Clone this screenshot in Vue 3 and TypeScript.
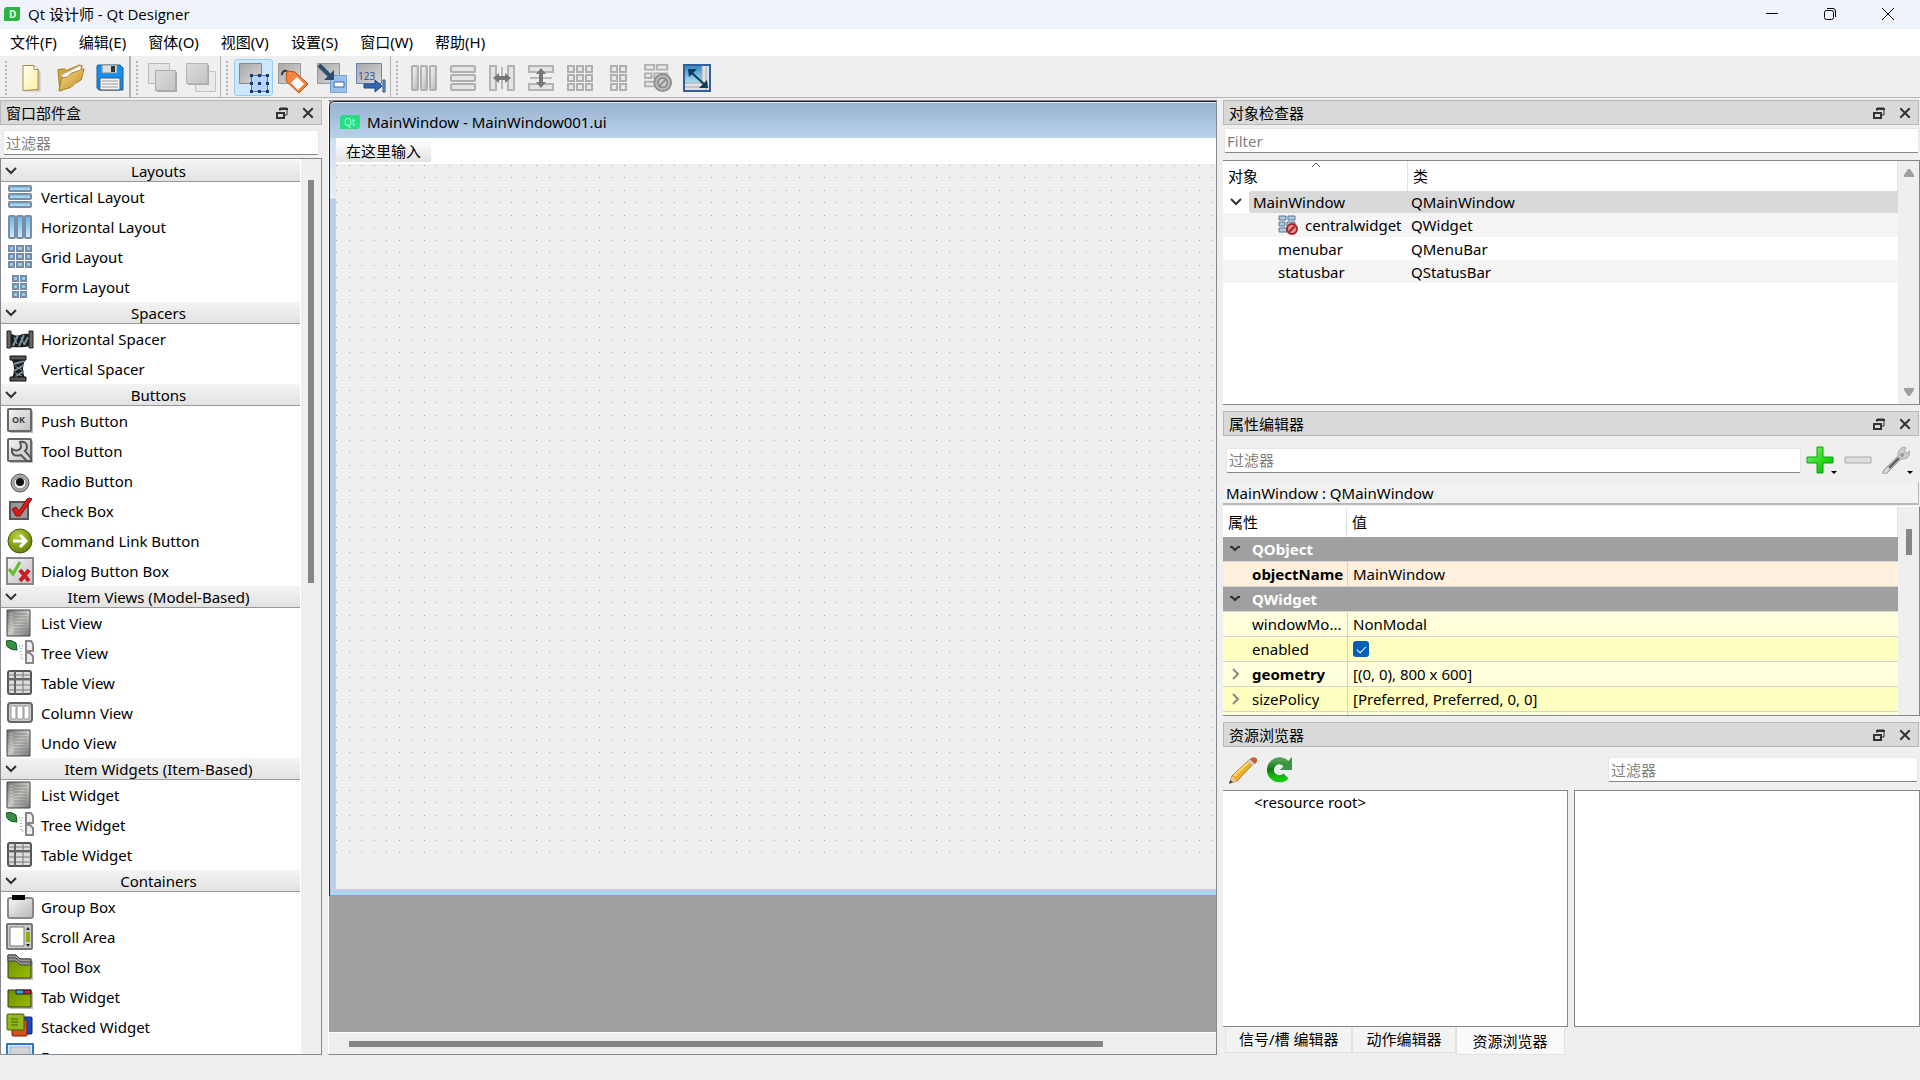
<script setup lang="ts">
import { ref } from 'vue'

interface WidgetItem {
  label: string
  icon: string
}
interface WidgetGroup {
  title: string
  items: WidgetItem[]
}
interface PropertyRow {
  name: string
  value?: string
  tone: string
  bold?: boolean
  group?: boolean
  expandable?: boolean
  check?: boolean
}

const menus: string[] = ['文件(F)', '编辑(E)', '窗体(O)', '视图(V)', '设置(S)', '窗口(W)', '帮助(H)']

const toolbars: { name: string; tools: { icon: string; label: string; active?: boolean }[] }[] = [
  {
    name: 'file',
    tools: [
      { icon: 'new', label: '新建' },
      { icon: 'open', label: '打开' },
      { icon: 'save', label: '保存' },
    ],
  },
  {
    name: 'order',
    tools: [
      { icon: 'lower', label: '放到后面' },
      { icon: 'raise', label: '放到前面' },
    ],
  },
  {
    name: 'mode',
    tools: [
      { icon: 'editwidgets', label: '编辑控件', active: true },
      { icon: 'buddy', label: '编辑信号/槽' },
      { icon: 'signal', label: '编辑伙伴' },
      { icon: 'taborder', label: '编辑 Tab 顺序' },
    ],
  },
  {
    name: 'layout',
    tools: [
      { icon: 'g-hlayout', label: '水平布局' },
      { icon: 'g-vlayout', label: '垂直布局' },
      { icon: 'g-hsplit', label: '水平分裂器' },
      { icon: 'g-vsplit', label: '垂直分裂器' },
      { icon: 'g-grid', label: '栅格布局' },
      { icon: 'g-form', label: '窗体布局' },
      { icon: 'g-break', label: '打破布局' },
      { icon: 'adjust', label: '调整大小' },
    ],
  },
]

const groups: WidgetGroup[] = [
  {
    title: 'Layouts',
    items: [
      { label: 'Vertical Layout', icon: 'vlayout' },
      { label: 'Horizontal Layout', icon: 'hlayout' },
      { label: 'Grid Layout', icon: 'grid' },
      { label: 'Form Layout', icon: 'form' },
    ],
  },
  {
    title: 'Spacers',
    items: [
      { label: 'Horizontal Spacer', icon: 'hspacer' },
      { label: 'Vertical Spacer', icon: 'vspacer' },
    ],
  },
  {
    title: 'Buttons',
    items: [
      { label: 'Push Button', icon: 'push' },
      { label: 'Tool Button', icon: 'tool' },
      { label: 'Radio Button', icon: 'radio' },
      { label: 'Check Box', icon: 'check' },
      { label: 'Command Link Button', icon: 'command' },
      { label: 'Dialog Button Box', icon: 'dialog' },
    ],
  },
  {
    title: 'Item Views (Model-Based)',
    items: [
      { label: 'List View', icon: 'list' },
      { label: 'Tree View', icon: 'tree' },
      { label: 'Table View', icon: 'table' },
      { label: 'Column View', icon: 'column' },
      { label: 'Undo View', icon: 'list' },
    ],
  },
  {
    title: 'Item Widgets (Item-Based)',
    items: [
      { label: 'List Widget', icon: 'list' },
      { label: 'Tree Widget', icon: 'tree' },
      { label: 'Table Widget', icon: 'table' },
    ],
  },
  {
    title: 'Containers',
    items: [
      { label: 'Group Box', icon: 'groupbox' },
      { label: 'Scroll Area', icon: 'scroll' },
      { label: 'Tool Box', icon: 'toolbox' },
      { label: 'Tab Widget', icon: 'tab' },
      { label: 'Stacked Widget', icon: 'stacked' },
      { label: 'Frame', icon: 'frame' },
    ],
  },
]

const properties: PropertyRow[] = [
  { name: 'QObject', tone: 'dark', group: true },
  { name: 'objectName', value: 'MainWindow', tone: 'peach', bold: true },
  { name: 'QWidget', tone: 'dark', group: true },
  { name: 'windowMo...', value: 'NonModal', tone: 'pale' },
  { name: 'enabled', tone: 'yellow', check: true },
  { name: 'geometry', value: '[(0, 0), 800 x 600]', tone: 'pale', bold: true, expandable: true },
  { name: 'sizePolicy', value: '[Preferred, Preferred, 0, 0]', tone: 'yellow', expandable: true },
  { name: '', value: '', tone: 'pale' },
]

const tabs: string[] = ['信号/槽 编辑器', '动作编辑器', '资源浏览器']
const activeTab = ref<number>(2)
const enabled = ref<boolean>(true)
const widgetFilter = ref<string>('')
const objectFilter = ref<string>('')
const propertyFilter = ref<string>('')
const resourceFilter = ref<string>('')
</script>

<template>
  <div class="app">
    <svg class="defs" aria-hidden="true">
      <defs>
        <linearGradient id="blue" x1="0" y1="0" x2="0" y2="1"><stop offset="0" stop-color="#6cb6e6" /><stop offset="1" stop-color="#ccebfa" /></linearGradient>
        <linearGradient id="gray" x1="0" y1="0" x2="1" y2="1"><stop offset="0" stop-color="#fafafa" /><stop offset="1" stop-color="#b4b4b4" /></linearGradient>
        <linearGradient id="soft" x1="0" y1="0" x2="1" y2="1"><stop offset="0" stop-color="#dcdcdc" /><stop offset="1" stop-color="#c4c4c4" /></linearGradient>
        <linearGradient id="mid" x1="0" y1="0" x2="1" y2="1"><stop offset="0" stop-color="#a8a8a8" /><stop offset="1" stop-color="#d8d8d8" /></linearGradient>
        <linearGradient id="pane" x1="0" y1="0" x2="1" y2="1"><stop offset="0" stop-color="#f4f4f4" /><stop offset="1" stop-color="#c0c0c0" /></linearGradient>
        <linearGradient id="list-fill" x1="0" y1="0" x2="1" y2="1"><stop offset="0" stop-color="#6f6f6f" /><stop offset=".5" stop-color="#c8c8c4" /><stop offset="1" stop-color="#777" /></linearGradient>
        <linearGradient id="cream" x1="0" y1="0" x2="1" y2="1"><stop offset="0" stop-color="#fffef0" /><stop offset="1" stop-color="#fdf0a0" /></linearGradient>
        <linearGradient id="gold" x1="0" y1="0" x2="1" y2="1"><stop offset="0" stop-color="#f8dc88" /><stop offset="1" stop-color="#c08c28" /></linearGradient>
        <linearGradient id="olive" x1="0" y1="0" x2="1" y2="1"><stop offset="0" stop-color="#6c8c00" /><stop offset="1" stop-color="#98c000" /></linearGradient>
        <linearGradient id="green" x1="0" y1="0" x2="1" y2="1"><stop offset="0" stop-color="#8af078" /><stop offset=".5" stop-color="#30dc20" /><stop offset="1" stop-color="#00b800" /></linearGradient>
        <linearGradient id="sky" x1="0" y1="0" x2="0" y2="1"><stop offset="0" stop-color="#3888c8" /><stop offset="1" stop-color="#b0e0f4" /></linearGradient>
        <linearGradient id="reload-fill" x1="0" y1="0" x2="0" y2="1"><stop offset="0" stop-color="#50a050" /><stop offset=".45" stop-color="#107818" /><stop offset="1" stop-color="#18c810" /></linearGradient>
        <radialGradient id="ball" cx=".4" cy=".3" r=".8"><stop offset="0" stop-color="#b8d040" /><stop offset="1" stop-color="#5c7800" /></radialGradient>
      </defs>

      <symbol id="new" viewBox="0 0 28 28"><path d="M6.500 2.500h11l5 5v20h-16z" fill="#888" opacity=".4" /><path d="M5 1.500h11l4 4v20l-15 1z" fill="url(#cream)" stroke="#a98c48" /><path d="M16 1.500v4h4" fill="#fff" stroke="#a98c48" /></symbol>
      <symbol id="open" viewBox="0 0 30 30"><path d="M1 6l7-1 2 2L24 1l3 1-1 4-18 11-3 12-2-1z" fill="#d4a43c" stroke="#a87c20" /><path d="M5 12L25 2l1 5-17 13z" fill="#fff" stroke="#ccc" /><path d="M2 29l3-14 6-1 4-4 14-5-3 12-7 4-4 4z" fill="url(#gold)" stroke="#a87c20" /></symbol>
      <symbol id="save" viewBox="0 0 28 28"><path d="M2 1h22l3 3v22H3l-2-2V2z" fill="#1090f4" stroke="#2a587c" /><path d="M6 1h15v8H6z" fill="#ddd" stroke="#78909c" /><path d="M15 2h4v6h-4z" fill="#333" /><path d="M4 14h20v12H4z" fill="#f4f4f4" stroke="#456" /><path d="M6 17h16M6 20h16M6 23h16" stroke="#999" /></symbol>
      <symbol id="lower" viewBox="0 0 30 30"><path d="M.5.500h21v20h-21z" fill="#e5e5e5" stroke="#bbb" /><path d="M9 9h20v20H9z" fill="#aaa" /><path d="M7.500 7.500h20v20h-20z" fill="url(#soft)" stroke="#aaa" /></symbol>
      <symbol id="raise" viewBox="0 0 30 30"><path d="M9.500 8.500h20v20h-20z" fill="#e9e9e9" stroke="#c4c4c4" /><path d="M2 2h21v20H2z" fill="#aaa" /><path d="M.5.500h21v20h-21z" fill="url(#soft)" stroke="#b4b4b4" /></symbol>
      <symbol id="editwidgets" viewBox="0 0 30 30"><path d="M.5.500h22v20h-22z" fill="url(#mid)" stroke="#888" /><path d="M12.500 12.500h16v16h-16z" fill="#b4d4fc" stroke="#4c74b4" /><path d="M11 11h3v3h-3zM19 11h3v3h-3zM27 11h3v3h-3zM11 19h3v3h-3zM27 19h3v3h-3zM11 27h3v3h-3zM19 27h3v3h-3zM27 27h3v3h-3zM19 19h3v3h-3z" fill="#1c3868" /></symbol>
      <symbol id="buddy" viewBox="0 0 30 30"><path d="M.5.500h22v20h-22z" fill="url(#mid)" stroke="#999" /><path d="M4 12q0-5 5-4" fill="none" stroke="#333" stroke-width="2" /><path d="M9 8l8 1 13 12-9 9L8 18z" fill="#f48440" stroke="#b85014" /><path d="M19 14l7 7-6 6-7-7z" fill="#fff" /></symbol>
      <symbol id="signal" viewBox="0 0 30 30"><path d="M.5.500h22v20h-22z" fill="url(#mid)" stroke="#999" /><path d="M13.500 12.500h16v17h-16z" fill="#98c0ec" stroke="#7ca0cc" /><path d="M17 19h10v5H17z" fill="#fff" stroke="#3c68a8" /><path d="M2 2l11 11" stroke="#2c4c70" stroke-width="4" /><path d="M17 17V7L7 17z" fill="#2c4c70" /></symbol>
      <symbol id="taborder" viewBox="0 0 30 30"><path d="M.5.500h25v20h-25z" fill="url(#mid)" stroke="#6884b0" /><text x="2" y="17" font-size="10" fill="#305898">123</text><path d="M8 21h11v-4l7 6-7 6v-4H8z" fill="#3468b8" stroke="#204880" /><path d="M27 17h2v12h-2z" fill="#8ab0e4" stroke="#204880" /></symbol>

      <symbol id="g-hlayout" viewBox="0 0 28 28"><g fill="url(#gray)" stroke="#b0b0b0" stroke-width="2"><rect x="2" y="2" width="6" height="24" rx="1" /><rect x="11" y="2" width="6" height="24" rx="1" /><rect x="20" y="2" width="6" height="24" rx="1" /></g></symbol>
      <symbol id="g-vlayout" viewBox="0 0 28 28"><g fill="#e4e4e4" stroke="#b0b0b0" stroke-width="2"><rect x="2" y="2" width="24" height="6" rx="1" /><rect x="2" y="11" width="24" height="6" rx="1" /><rect x="2" y="20" width="24" height="6" rx="1" /></g></symbol>
      <symbol id="g-hsplit" viewBox="0 0 28 28"><g fill="#e4e4e4" stroke="#b4b4b4" stroke-width="2"><rect x="2" y="2" width="6" height="24" /><rect x="20" y="2" width="6" height="24" /></g><path d="M14 3v22" stroke="#bbb" stroke-width="2" /><path d="M5 14l6-5v3h6V9l6 5-6 5v-3h-6v3z" fill="#777" /></symbol>
      <symbol id="g-vsplit" viewBox="0 0 28 28"><g fill="#e4e4e4" stroke="#b4b4b4" stroke-width="2"><rect x="2" y="2" width="24" height="6" /><rect x="2" y="20" width="24" height="6" /></g><path d="M3 14h22" stroke="#bbb" stroke-width="2" /><path d="M14 4l5 6h-3v8h3l-5 6-5-6h3v-8H9z" fill="#777" /></symbol>
      <symbol id="g-grid" viewBox="0 0 28 28"><g fill="#e8e8e8" stroke="#b0b0b0" stroke-width="2"><path d="M2 2h6v6H2zM11 2h6v6h-6zM20 2h6v6h-6zM2 11h6v6H2zM11 11h6v6h-6zM20 11h6v6h-6zM2 20h6v6H2zM11 20h6v6h-6zM20 20h6v6h-6z" /></g></symbol>
      <symbol id="g-form" viewBox="0 0 28 28"><g fill="#e8e8e8" stroke="#b0b0b0" stroke-width="2"><path d="M6 2h6v6H6zM15 2h6v6h-6zM6 11h6v6H6zM15 11h6v6h-6zM6 20h6v6H6zM15 20h6v6h-6z" /></g></symbol>
      <symbol id="g-break" viewBox="0 0 30 30"><g fill="#e8e8e8" stroke="#b0b0b0" stroke-width="2"><path d="M1 1h10v5H1zM14 1h11v5H14zM1 10h7v5H1zM11 10h14v5H11zM1 19h13v5H1z" /></g><circle cx="20" cy="20" r="9" fill="#bbb" stroke="#8c8c8c" stroke-width="2" /><circle cx="20" cy="20" r="5" fill="#ccc" stroke="#8c8c8c" stroke-width="2" /><path d="M16 24l8-8" stroke="#8c8c8c" stroke-width="2" /></symbol>
      <symbol id="adjust" viewBox="0 0 28 28"><path d="M1 1h26v26H1z" fill="#e0e0e0" stroke="#30609c" stroke-width="2" /><path d="M2 2h17v17H2z" fill="url(#sky)" /><path d="M19 2v17H2M2 23h24M23 2v24" stroke="#aaa" fill="none" /><path d="M9 9l13 12" stroke="#0c3c5c" stroke-width="2" /><path d="M5 5h9l-8 8zM25 24h-9l8-8z" fill="#0c3c5c" /></symbol>

      <symbol id="vlayout" viewBox="0 0 28 28"><g fill="url(#blue)" stroke="#7a8ca4" stroke-width="2"><rect x="3" y="3" width="22" height="5" rx="1" /><rect x="3" y="11" width="22" height="5" rx="1" /><rect x="3" y="19" width="22" height="5" rx="1" /></g></symbol>
      <symbol id="hlayout" viewBox="0 0 28 28"><g fill="url(#blue)" stroke="#7a8ca4" stroke-width="2"><rect x="3" y="3" width="6" height="22" rx="1" /><rect x="11" y="3" width="6" height="22" rx="1" /><rect x="19" y="3" width="6" height="22" rx="1" /></g></symbol>
      <symbol id="grid" viewBox="0 0 28 28"><g fill="#94cef0" stroke="#7a8ca4" stroke-width="2"><path d="M3 3h5v5H3zM11 3h6v5h-6zM20 3h5v5h-5zM3 11h5v5H3zM11 11h6v5h-6zM20 11h5v5h-5zM3 19h5v5H3zM11 19h6v5h-6zM20 19h5v5h-5z" /></g></symbol>
      <symbol id="form" viewBox="0 0 28 28"><g fill="#94cef0" stroke="#7a8ca4" stroke-width="2"><path d="M7 3h5v5H7zM15 3h5v5h-5zM7 11h5v5H7zM15 11h5v5h-5zM7 19h5v5H7zM15 19h5v5h-5z" /></g></symbol>
      <symbol id="hspacer" viewBox="0 0 28 28"><path d="M4 8q6 4 10 2t10-1v12q-6 2-20 1z" fill="#1c1c1c" /><path d="M7 21l5-11M13 21l5-11M18 20l4-8" stroke="#7494a8" stroke-width="2" /><path d="M8 12l3 7M15 12l3 7" stroke="#8ca0ac" /><path d="M1 6h4v17H1zM23 6h4v17h-4z" fill="#666" stroke="#222" /></symbol>
      <symbol id="vspacer" viewBox="0 0 28 28"><path d="M6 5h13q-4 9 0 18H6q4-9 0-18z" fill="#1c1c1c" /><path d="M8 9l10-3M8 16l10-6M9 22l9-6" stroke="#7494a8" stroke-width="2" /><path d="M9 11l7 4M9 18l7 3" stroke="#8ca0ac" /><path d="M4 1h16v4H4zM4 22h16v4H4z" fill="#555" stroke="#111" /></symbol>
      <symbol id="push" viewBox="0 0 28 28"><path d="M4 4h23v22H4z" fill="#bbb" /><rect x="2" y="2" width="23" height="22" rx="1" fill="url(#pane)" stroke="#666" stroke-width="2" /><text x="6" y="16" font-size="9" font-weight="700" fill="#444">OK</text></symbol>
      <symbol id="tool" viewBox="0 0 28 28"><path d="M4 4h23v22H4z" fill="#bbb" /><rect x="2" y="2" width="23" height="22" rx="1" fill="url(#pane)" stroke="#666" stroke-width="2" /><path d="M14 5q7-1 7 5 0 3-2 4l6 7v3h-4l-6-6q-8 2-9-3v-3q5 3 8 0 2-2 0-7z" fill="#d4d4d4" stroke="#555" stroke-width="2" /></symbol>
      <symbol id="radio" viewBox="0 0 28 28"><circle cx="14" cy="16" r="9" fill="#a8a8a8" stroke="#555" /><circle cx="14" cy="16" r="6" fill="#eee" stroke="#888" /><circle cx="14" cy="15" r="4" fill="#111" /></symbol>
      <symbol id="check" viewBox="0 0 28 28"><path d="M4 5h18v17H4z" fill="#999" stroke="#555" stroke-width="2" /><path d="M6 12l4-2 3 4 8-12q3-2 5 0L14 19h-4z" fill="#e01818" stroke="#801010" /></symbol>
      <symbol id="command" viewBox="0 0 28 28"><circle cx="14" cy="14" r="12" fill="url(#ball)" stroke="#44580c" /><path d="M7 14h11M14 8l6 6-6 6" fill="none" stroke="#fff" stroke-width="3" /></symbol>
      <symbol id="dialog" viewBox="0 0 28 28"><path d="M1 1h26v26H1z" fill="url(#pane)" stroke="#888" stroke-width="2" /><path d="M3 12l4 5 7-12" fill="none" stroke="#64bc2c" stroke-width="3" /><path d="M14 13l9 11M23 13l-9 11" stroke="#cc1c24" stroke-width="4" /></symbol>
      <symbol id="list" viewBox="0 0 28 28"><path d="M1 1h23v26H1z" fill="url(#list-fill)" stroke="#444" /><path d="M8 5h13M8 8h13M8 11h13M8 14h13M8 17h13M8 20h13M8 23h13" stroke="#888" /><path d="M4 5h2M4 8h2M4 11h2M4 14h2M4 17h2M4 20h2M4 23h2" stroke="#ccc" /></symbol>
      <symbol id="tree" viewBox="0 0 28 28"><path d="M0 2q5-2 10 2l1 7q-9 0-11-6z" fill="#389040" stroke="#145420" /><path d="M13 7h6M15 9v11h4" fill="none" stroke="#777" stroke-dasharray="1 2" stroke-width="1" /><g fill="#eee" stroke="#888" stroke-width="2"><path d="M20 2h5l2 3v7h-7zM20 14h4l3 3v7h-7z" /></g></symbol>
      <symbol id="table" viewBox="0 0 28 28"><rect x="2" y="2" width="23" height="23" rx="2" fill="#dcdcdc" stroke="#555" stroke-width="2" /><path d="M2 6h23M2 11h23M2 16h23M2 21h23M9 2v23M17 2v23" stroke="#777" stroke-width="1" /><path d="M9 2v23M2 10h23" stroke="#666" stroke-width="2" /></symbol>
      <symbol id="column" viewBox="0 0 28 28"><rect x="2" y="4" width="24" height="19" rx="3" fill="#ccc" stroke="#666" stroke-width="2" /><path d="M5 7h5v13H5zM11 7h6v13h-6zM18 7h5v13h-5z" fill="#fff" stroke="#999" /></symbol>
      <symbol id="groupbox" viewBox="0 0 28 28"><rect x="2" y="5" width="25" height="20" rx="2" fill="url(#gray)" stroke="#888" stroke-width="2" /><path d="M6 2h13v5H6z" fill="#050505" /></symbol>
      <symbol id="scroll" viewBox="0 0 28 28"><rect x="1" y="1" width="25" height="25" rx="1" fill="#ccc" stroke="#777" stroke-width="2" /><path d="M4 4h14v19H4z" fill="#fff" stroke="#777" /><path d="M20 9h4v10h-4z" fill="#8cb000" /><path d="M20 7l2-3 2 3zM20 21l2 3 2-3z" fill="#222" /></symbol>
      <symbol id="toolbox" viewBox="0 0 28 28"><path d="M4 4h9l4 4h10v19H4z" fill="#bbb" /><path d="M2 2h8l4 4h11v19H2z" fill="url(#olive)" stroke="#333" /><path d="M2 2h8l4 4h11v6H14l-4-4H2z" fill="#999" stroke="#444" /><path d="M2 5h8l4 4h11" fill="none" stroke="#444" /></symbol>
      <symbol id="tab" viewBox="0 0 28 28"><path d="M4 9h23v17H4z" fill="#bbb" /><path d="M2 7h23v17H2z" fill="url(#olive)" stroke="#333" stroke-width="1" /><path d="M10 7h8v4h-8z" fill="#38a4e4" stroke="#222" /><path d="M18 7h7v4h-7z" fill="#d02028" stroke="#222" /></symbol>
      <symbol id="stacked" viewBox="0 0 28 28"><rect x="11" y="4" width="15" height="17" rx="1" fill="#1848c8" stroke="#082060" /><rect x="6" y="7" width="15" height="16" rx="1" fill="#d85020" stroke="#702008" /><rect x="1" y="1" width="17" height="16" rx="1" fill="#90b81c" stroke="#485c08" /><path d="M5 6h7M5 9h7M5 12h7" stroke="#3c6400" /></symbol>
      <symbol id="frame" viewBox="0 0 28 28"><path d="M1 1h26v26H1z" fill="#dceaf4" stroke="#3478c4" stroke-width="2" /><path d="M4 4h20v20H4z" fill="#d4d4d4" stroke="#90bce4" /></symbol>
      <symbol id="broken" viewBox="0 0 20 20"><path d="M1 1h7v4H1zM10 1h7v4h-7zM1 7h6v4H1zM9 7h8v4H9zM1 13h8v4H1z" fill="#a4d0ec" stroke="#60748c" /><circle cx="14" cy="14" r="5" fill="#d89090" stroke="#a82828" stroke-width="2" /><path d="M11 17l6-6" stroke="#a82828" stroke-width="2" /></symbol>

      <symbol id="plus" viewBox="0 0 28 28"><path d="M11 1h6v10h10v6H17v10h-6V17H1v-6h10z" fill="url(#green)" stroke="#12a012" stroke-width="1" /></symbol>
      <symbol id="minus" viewBox="0 0 28 28"><path d="M1 11h26v6H1z" fill="#ddd" stroke="#aaa" /></symbol>
      <symbol id="wrench" viewBox="0 0 28 28"><path d="M3 26L19 10" stroke="#999" stroke-width="5" stroke-linecap="round" /><path d="M3 26L19 10" stroke="#dcdcdc" stroke-width="3" stroke-linecap="round" /><path d="M7 22L17 12" stroke="#555" stroke-width="2" /><path d="M16 11q-1-8 6-10l2 1-2 3 3 2 3-2q0 8-7 8-3 1-5-2z" fill="#ccc" stroke="#aaa" /><circle cx="20" cy="9" r="2" fill="#999" /></symbol>
      <symbol id="pencil" viewBox="0 0 28 28"><path d="M1 27l2-7L21 3l4 4L8 25z" fill="#eeac2c" stroke="#b47c1c" /><path d="M5 20L21 5" stroke="#ffd878" stroke-width="2" /><path d="M1 27l2-7 5 5z" fill="#e8c898" /><path d="M0 28l1-4 3 2z" fill="#444" /><path d="M19 5l2-2 5 5-2 2z" fill="#ccc" /><path d="M21 3q3-3 6-1t0 5l-1 1z" fill="#c85c3c" /></symbol>
      <symbol id="reload" viewBox="0 0 28 28"><path d="M20 20a9 9 0 1 1 1-11" fill="none" stroke="url(#reload-fill)" stroke-width="7" /><path d="M26 1v13H14z" fill="#3c9444" /></symbol>

      <symbol id="float" viewBox="0 0 12 12"><path d="M4 4V1h7v7H8" fill="none" stroke="#333" stroke-width="1" /><path d="M3 1h9v2H3zM0 5h9v2H0z" fill="#333" /><path d="M1 6h7v5H1z" fill="none" stroke="#333" stroke-width="2" /></symbol>
      <symbol id="close" viewBox="0 0 12 12"><path d="M2 2l8 8M10 2l-8 8" stroke="#333" stroke-width="2" stroke-linecap="square" /></symbol>
      <symbol id="chev-down" viewBox="0 0 12 12"><path d="M1 3l5 5 5-5" fill="none" stroke="#333" stroke-width="2" /></symbol>
      <symbol id="chev-small" viewBox="0 0 12 12"><path d="M1 4h2l3 3 3-3h2" fill="none" stroke="#333" stroke-width="2" /></symbol>
      <symbol id="chev-right" viewBox="0 0 12 12"><path d="M4 1l5 5-5 5" fill="none" stroke="#888" stroke-width="2" /></symbol>
    </svg>

    <header class="titlebar">
      <svg class="app-icon" viewBox="0 0 16 14"><path d="M2 0h14v12l-2 2H0V2z" fill="#2cb440" /><text x="5" y="11" font-size="10" font-weight="700" fill="#e4ffe4">D</text></svg>
      <h1>Qt 设计师 - Qt Designer</h1>
      <div class="window-buttons">
        <button type="button" aria-label="最小化"><svg viewBox="0 0 12 12"><path d="M0 5.500h12" stroke="#000" /></svg></button>
        <button type="button" aria-label="还原"><svg viewBox="0 0 12 12"><rect x=".5" y="2.500" width="9" height="9" rx="2" fill="none" stroke="#000" /><path d="M3 .5h6q2.500 0 2.500 2.500v6" fill="none" stroke="#000" /></svg></button>
        <button type="button" aria-label="关闭"><svg viewBox="0 0 12 12"><path d="M0 0l12 12M12 0L0 12" stroke="#000" /></svg></button>
      </div>
    </header>

    <nav class="menubar">
      <button v-for="m in menus" :key="m" type="button">{{ m }}</button>
    </nav>

    <div class="toolbars">
      <div v-for="bar in toolbars" :key="bar.name" class="toolbar" :class="bar.name">
        <span class="grip"></span>
        <button v-for="t in bar.tools" :key="t.icon" type="button" :class="{ active: t.active }" :aria-label="t.label">
          <svg><use :href="'#' + t.icon" /></svg>
        </button>
      </div>
    </div>

    <main class="body">
      <aside class="dock widget-box">
        <div class="dock-title">
          <h2>窗口部件盒</h2>
          <button type="button" aria-label="浮动"><svg><use href="#float" /></svg></button>
          <button type="button" aria-label="关闭"><svg><use href="#close" /></svg></button>
        </div>
        <input v-model="widgetFilter" class="filter" type="text" placeholder="过滤器" aria-label="过滤器" />
        <div class="widget-list">
          <div class="widget-scroll">
            <section v-for="g in groups" :key="g.title">
              <button type="button" class="group-title">
                <svg><use href="#chev-down" /></svg>
                <span>{{ g.title }}</span>
              </button>
              <ul>
                <li v-for="w in g.items" :key="w.label">
                  <svg><use :href="'#' + w.icon" /></svg>
                  <span>{{ w.label }}</span>
                </li>
              </ul>
            </section>
          </div>
          <div class="scrollbar"><span class="thumb"></span></div>
        </div>
      </aside>

      <section class="mdi">
        <div class="canvas">
          <article class="form-window">
            <header>
              <svg viewBox="0 0 20 14"><path d="M2 0h18v12l-2 2H0V2z" fill="#2cdc84" /><text x="4" y="11" font-size="10" fill="#a4ffd0">Qt</text></svg>
              <h2>MainWindow - MainWindow001.ui</h2>
            </header>
            <div class="form-body">
              <div class="form-menu"><button type="button">在这里输入</button></div>
              <div class="form-grid"></div>
              <div class="form-status"></div>
            </div>
          </article>
        </div>
        <div class="hscroll"><span class="thumb"></span></div>
      </section>

      <aside class="side">
        <section class="dock">
          <div class="dock-title">
            <h2>对象检查器</h2>
            <button type="button" aria-label="浮动"><svg><use href="#float" /></svg></button>
            <button type="button" aria-label="关闭"><svg><use href="#close" /></svg></button>
          </div>
          <input v-model="objectFilter" class="filter object-filter" type="text" placeholder="Filter" aria-label="Filter" />
          <div class="panel object-panel">
            <table class="objects">
              <colgroup><col class="name-col" /><col /></colgroup>
              <thead>
                <tr>
                  <th>对象<svg class="sort" viewBox="0 0 10 6"><path d="M1 5l4-4 4 4" fill="none" stroke="#666" /></svg></th>
                  <th>类</th>
                </tr>
              </thead>
              <tbody>
                <tr class="selected">
                  <td><div class="root"><svg><use href="#chev-down" /></svg><span>MainWindow</span></div></td>
                  <td>QMainWindow</td>
                </tr>
                <tr class="alt tall">
                  <td><div class="leaf"><svg><use href="#broken" /></svg>centralwidget</div></td>
                  <td>QWidget</td>
                </tr>
                <tr>
                  <td><div class="leaf">menubar</div></td>
                  <td>QMenuBar</td>
                </tr>
                <tr class="alt">
                  <td><div class="leaf">statusbar</div></td>
                  <td>QStatusBar</td>
                </tr>
              </tbody>
            </table>
            <div class="scrollbar arrows">
              <svg viewBox="0 0 10 8"><path d="M4 0h2l4 6v2H0V6z" fill="#a0a0a0" /></svg>
              <svg viewBox="0 0 10 8"><path d="M4 8h2l4-6V0H0v2z" fill="#a0a0a0" /></svg>
            </div>
          </div>
        </section>

        <section class="dock">
          <div class="dock-title">
            <h2>属性编辑器</h2>
            <button type="button" aria-label="浮动"><svg><use href="#float" /></svg></button>
            <button type="button" aria-label="关闭"><svg><use href="#close" /></svg></button>
          </div>
          <div class="property-tools">
            <input v-model="propertyFilter" class="filter" type="text" placeholder="过滤器" aria-label="过滤器" />
            <button type="button" aria-label="添加动态属性" class="drop"><svg><use href="#plus" /></svg></button>
            <button type="button" aria-label="删除动态属性"><svg><use href="#minus" /></svg></button>
            <button type="button" aria-label="配置" class="drop"><svg><use href="#wrench" /></svg></button>
          </div>
          <p class="object-label">MainWindow : QMainWindow</p>
          <div class="panel property-panel">
            <table class="properties">
              <colgroup><col class="prop-col" /><col /></colgroup>
              <thead>
                <tr><th>属性</th><th>值</th></tr>
              </thead>
              <tbody>
                <tr v-for="p in properties" :key="p.name" :class="[p.tone, { bold: p.bold || p.group }]">
                  <td :colspan="p.group ? 2 : 1">
                    <div class="prop-name">
                      <svg v-if="p.group"><use href="#chev-small" /></svg>
                      <svg v-else-if="p.expandable"><use href="#chev-right" /></svg>
                      <span>{{ p.name }}</span>
                    </div>
                  </td>
                  <td v-if="!p.group" class="value">
                    <input v-if="p.check" v-model="enabled" type="checkbox" :aria-label="p.name" />
                    <template v-else>{{ p.value }}</template>
                  </td>
                </tr>
              </tbody>
            </table>
            <div class="scrollbar"><span class="thumb"></span></div>
          </div>
        </section>

        <section class="dock">
          <div class="dock-title">
            <h2>资源浏览器</h2>
            <button type="button" aria-label="浮动"><svg><use href="#float" /></svg></button>
            <button type="button" aria-label="关闭"><svg><use href="#close" /></svg></button>
          </div>
          <div class="resource-tools">
            <button type="button" aria-label="编辑资源"><svg><use href="#pencil" /></svg></button>
            <button type="button" aria-label="重新加载"><svg><use href="#reload" /></svg></button>
            <input v-model="resourceFilter" class="filter" type="text" placeholder="过滤器" aria-label="过滤器" />
          </div>
          <div class="resource-panes">
            <div class="pane">&lt;resource root&gt;</div>
            <div class="pane"></div>
          </div>
        </section>

        <div class="tabs" role="tablist">
          <button
            v-for="(t, i) in tabs"
            :key="t"
            type="button"
            role="tab"
            :aria-selected="activeTab === i"
            :class="{ current: activeTab === i }"
            @click="activeTab = i"
          >{{ t }}</button>
        </div>
      </aside>
    </main>
    <footer class="statusbar"></footer>
  </div>
</template>

<style>
body {
  overflow: hidden;
  background: #efefef;
}
</style>

<style scoped>
.app {
  display: flex;
  flex-direction: column;
  height: 100vh;
  background: #efefef;
  color: #000;
  font: 15px/20px "Noto Sans", "Noto Sans CJK SC", sans-serif;
}
.defs {
  position: absolute;
  width: 0;
  height: 0;
}
* {
  box-sizing: border-box;
}
button {
  display: flex;
  align-items: center;
  justify-content: center;
  padding: 0;
  border: 0;
  background: none;
  color: inherit;
  font: inherit;
  white-space: nowrap;
}
h1,
h2,
p,
ul {
  margin: 0;
  padding: 0;
  font: inherit;
  list-style: none;
}
svg {
  flex: none;
  display: block;
}

.titlebar {
  display: flex;
  align-items: center;
  flex: 0 0 29px;
  padding: 0 3px 2px 4px;
  background: #eff3fb;
  font-family: "Open Sans", "Noto Sans CJK SC", sans-serif;
}
.app-icon {
  width: 16px;
  height: 14px;
  margin-right: 8px;
  overflow: visible;
}
.window-buttons {
  display: flex;
  margin-left: auto;
}
.window-buttons button {
  width: 58px;
  height: 27px;
}
.window-buttons svg {
  width: 12px;
  height: 12px;
}

.menubar {
  display: flex;
  flex: 0 0 27px;
  gap: 22px;
  padding: 0 10px 2px;
  background: #fff;
}

.toolbars {
  display: flex;
  flex: 0 0 42px;
  border-bottom: 1px solid #b4b4b4;
}
.toolbar {
  display: flex;
  align-items: center;
  padding-top: 2px;
  border-right: 1px solid #b4b4b4;
}
.toolbar.file {
  border-right-width: 2px;
}
.toolbar.layout {
  flex: 1;
  border-right: 0;
}
.grip {
  width: 2px;
  height: 34px;
  margin: 0 6px 0 5px;
  background: repeating-linear-gradient(#b8b8b8 0 2px, transparent 2px 4px);
}
.file .grip {
  margin-right: 5px;
}
.toolbar button {
  width: 39px;
  height: 37px;
  border: 1px solid transparent;
  border-radius: 3px;
}
.toolbar.order button {
  width: 38px;
}
.toolbar button.active {
  border-color: #98ccf4;
  background: #cce8ff;
}
.toolbar svg {
  width: 28px;
  height: 28px;
}
.toolbar.mode svg,
.toolbar.order svg {
  width: 30px;
  height: 30px;
}

.body {
  display: flex;
  flex: 1;
  min-height: 0;
  padding-top: 2px;
}
.dock {
  display: flex;
  flex-direction: column;
  min-width: 0;
  min-height: 0;
}
.widget-box {
  flex: 0 0 322px;
}
.dock-title {
  display: flex;
  align-items: center;
  flex: 0 0 25px;
  padding: 1px 0 0 5px;
  border: 1px solid #b8b8b8;
  background: #d9d9d9;
}
.dock-title h2 {
  flex: 1;
}
.dock-title button {
  width: 26px;
  height: 22px;
}
.dock-title svg {
  width: 12px;
  height: 12px;
}
.filter {
  flex: none;
  height: 25px;
  min-width: 0;
  padding: 0 2px;
  border: 1px solid #e6e6e6;
  border-bottom: 1px solid #868686;
  border-radius: 2px;
  outline: 0;
  background: #fff;
  font: inherit;
}
.filter::placeholder {
  color: #808080;
  opacity: 1;
}
.widget-box > .filter {
  margin: 5px 3px 3px;
}
.widget-list {
  display: flex;
  flex: 1;
  min-height: 0;
  border: 1px solid #828790;
}
.widget-scroll {
  flex: 1;
  overflow: hidden;
  padding: 1px 1px 0 0;
  background: #fff;
}
.group-title {
  width: 100%;
  height: 22px;
  padding: 0 0 0 4px;
  border-bottom: 1px solid #989898;
  background: linear-gradient(#f4f4f4, #e2e2e2);
}
.group-title svg {
  width: 12px;
  height: 12px;
}
.group-title span {
  flex: 1;
}
.widget-scroll li {
  display: flex;
  align-items: center;
  height: 30px;
  padding-left: 5px;
  gap: 7px;
}
.widget-scroll li svg {
  width: 28px;
  height: 28px;
}
.scrollbar {
  flex: 0 0 20px;
  display: flex;
  flex-direction: column;
  align-items: center;
  background: #efefef;
}
.scrollbar .thumb {
  width: 6px;
  height: 403px;
  margin-top: 21px;
  background: #868686;
}

.mdi {
  display: flex;
  flex: 1;
  flex-direction: column;
  min-width: 0;
  margin: 0 6px;
  border: 1px solid #828790;
  border-left-color: #fff;
}
.canvas {
  flex: 1;
  min-height: 0;
  overflow: hidden;
  background: #a0a0a0;
}
.form-window {
  width: 1010px;
  border: 1px solid #222;
  border-bottom: 0;
  border-radius: 6px 0 0;
  background: #b9d1ea;
}
.form-window > header {
  display: flex;
  align-items: center;
  height: 36px;
  padding: 3px 10px 0;
  gap: 7px;
  border-top: 1px solid #dfe9f5;
  border-radius: 5px 0 0;
  background: linear-gradient(#99b4d1, #b9d1ea);
}
.form-window > header svg {
  width: 20px;
  height: 14px;
}
.form-body {
  padding: 0 6px 6px;
  border-bottom: 1px solid #20d0e8;
  background: linear-gradient(#cfdff0, #e6eef7 60px, #b9d1ea 61px);
}
.form-menu {
  height: 26px;
  padding-top: 2px;
  background: #fff;
}
.form-menu button {
  height: 22px;
  padding: 0 10px;
  background: linear-gradient(#fff, #e2e2e2);
}
.form-grid {
  height: 690px;
  background:
    conic-gradient(from 270deg at 1px 1px, #a4a4a4 90deg, transparent 0) 0 1px / 25px 25px,
    conic-gradient(from 270deg at 1px 1px, #a4a4a4 90deg, transparent 0) 13px 1px / 25px 25px,
    conic-gradient(from 270deg at 1px 1px, #a4a4a4 90deg, transparent 0) 0 13px / 25px 25px,
    conic-gradient(from 270deg at 1px 1px, #a4a4a4 90deg, transparent 0) 13px 13px / 25px 25px #efefef;
}
.form-status {
  height: 35px;
  background: #efefef;
}
.hscroll {
  display: flex;
  align-items: center;
  flex: 0 0 22px;
  padding-left: 20px;
  border-top: 1px solid #fff;
}
.hscroll .thumb {
  width: 87%;
  height: 6px;
  background: #868686;
}

.side {
  display: flex;
  flex: 0 0 697px;
  flex-direction: column;
}
.side .dock {
  flex: 1 1 0;
  margin-bottom: 6px;
}
.side .dock:nth-of-type(3) {
  margin-bottom: 0;
}
.side .dock-title {
  margin-right: 1px;
}
.object-filter {
  margin: 3px 1px 7px;
}
.panel {
  display: flex;
  align-items: flex-start;
  flex: 1;
  min-height: 0;
  overflow: hidden;
  border: 1px solid #828790;
  border-left: 0;
  background: #fff;
}
.panel .scrollbar {
  flex-basis: 21px;
  align-self: stretch;
}
.scrollbar.arrows {
  justify-content: space-between;
  padding: 8px 0;
}
.arrows svg {
  width: 10px;
  height: 8px;
}
table {
  flex: 1 1 0;
  width: 100%;
  min-width: 0;
  border-collapse: separate;
  border-spacing: 0;
  table-layout: fixed;
}
th {
  height: 30px;
  padding: 0 5px;
  border-right: 1px solid #e2e2e2;
  font-weight: 400;
  text-align: left;
}
td {
  overflow: hidden;
  padding: 0;
  white-space: nowrap;
}
.name-col {
  width: 185px;
}
.prop-col {
  width: 124px;
}
.objects th {
  position: relative;
}
.sort {
  position: absolute;
  top: 1px;
  left: 88px;
  width: 10px;
  height: 6px;
}
.objects td {
  height: 23px;
}
.objects td + td {
  padding-left: 3px;
}
.objects .alt {
  background: #f5f5f5;
}
.objects .selected td {
  height: 22px;
  background: #d9d9d9;
}
.objects .tall td {
  height: 24px;
}
.objects .selected td:first-child {
  background: none;
}
.root {
  display: flex;
  align-items: center;
  padding-left: 7px;
  gap: 7px;
}
.root svg {
  width: 12px;
  height: 12px;
}
.root span {
  flex: 1;
  padding: 1px 4px;
  border-radius: 3px 0 0 3px;
  background: #d9d9d9;
}
.leaf {
  display: flex;
  align-items: center;
  padding-left: 55px;
  gap: 7px;
}
.leaf svg {
  width: 20px;
  height: 20px;
}

.property-tools {
  display: flex;
  align-items: center;
  flex: 0 0 44px;
  margin-top: 2px;
  padding: 0 5px 0 3px;
}
.property-tools .filter {
  flex: 1;
}
.property-tools button {
  width: 38px;
  height: 36px;
}
.property-tools svg,
.resource-tools svg {
  width: 28px;
  height: 28px;
}
.drop {
  position: relative;
}
.drop::after {
  position: absolute;
  right: 2px;
  bottom: 4px;
  border: 3px solid transparent;
  border-top-color: #000;
  border-bottom: 0;
  content: "";
}
.object-label {
  flex: none;
  height: 23px;
  margin-right: 1px;
  padding: 1px 3px;
  border-right: 1px solid #b8b8b8;
  border-bottom: 2px solid #b8b8b8;
  background: #f2f2f2;
}
.property-panel {
  margin-top: 1px;
  border-top-color: #fff;
}
.properties td {
  height: 25px;
  border-bottom: 1px solid #d4d4d4;
}
.properties td.value {
  padding-left: 5px;
  border-left: 1px solid #d4d4d4;
}
.prop-name {
  display: flex;
  align-items: center;
  position: relative;
  padding-left: 29px;
}
.prop-name svg {
  position: absolute;
  left: 6px;
  width: 12px;
  height: 12px;
}
.prop-name span {
  min-width: 0;
  overflow: hidden;
  text-overflow: ellipsis;
}
.dark {
  background: #a0a0a0;
  color: #fff;
}
.peach {
  background: #fff0de;
}
.pale {
  background: #ffffdc;
}
.yellow {
  background: #ffffbf;
}
.bold td:first-child {
  font-weight: 700;
}
.property-panel .thumb {
  height: 26px;
  margin-top: 22px;
}
input[type="checkbox"] {
  display: block;
  width: 16px;
  height: 16px;
  margin: 0;
  appearance: none;
  border-radius: 3px;
  background: #005fb8;
}
input[type="checkbox"]:checked::after {
  display: block;
  width: 8px;
  height: 4px;
  margin: 5px 4px;
  border: solid #fff;
  border-width: 0 0 1px 1px;
  transform: rotate(-45deg);
  content: "";
}

.resource-tools {
  display: flex;
  align-items: center;
  flex: 0 0 43px;
  padding: 2px 2px 0 1px;
}
.resource-tools button {
  width: 37px;
  height: 36px;
}
.resource-tools .filter {
  width: 310px;
  margin-left: auto;
}
.resource-panes {
  display: flex;
  flex: 1;
  gap: 6px;
  min-height: 0;
}
.pane {
  flex: 1;
  padding: 1px 31px;
  border: 1px solid #828790;
  background: #fff;
}
.pane:first-child {
  border-left: 0;
}
.tabs {
  display: flex;
  flex: 0 0 28px;
  align-items: flex-start;
  padding-left: 2px;
}
.tabs button {
  height: 26px;
  padding: 0 13px 2px;
  border: 1px solid #e2e2e2;
  border-top: 0;
  background: #f3f3f3;
}
.tabs button.current {
  height: 28px;
  padding: 0 16px;
  background: #f9f9f9;
}
.statusbar {
  flex: 0 0 25px;
}
</style>
